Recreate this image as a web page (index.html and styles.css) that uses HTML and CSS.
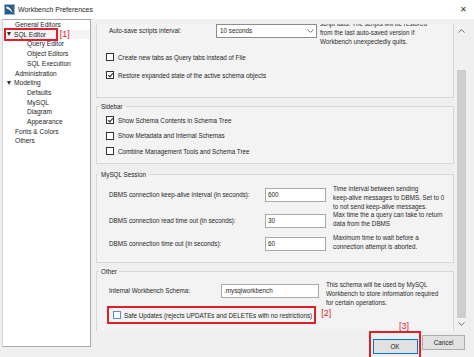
FILE: index.html
```html
<!DOCTYPE html>
<html lang="en">
<head>
    <meta charset="UTF-8">
    <meta name="viewport" content="width=device-width, initial-scale=1.0">
    <title>Workbench Preferences</title>
    <link rel="stylesheet" href="styles.css">
</head>
<body>

    <div class="window">
        <!-- Title bar -->
        <div class="titlebar">
            <svg class="app-icon" width="11" height="11" viewBox="0 0 11 11">
                <rect x="0.5" y="0.5" width="10" height="10" fill="#2b5f8a" stroke="#9bb7cf"/>
                <path d="M2.2 2.6 C5 3 7.4 5 8.6 8.8 C7 6.8 5.2 5.4 2.6 4.4 Z" fill="#ffffff"/>
            </svg>
            <span class="title">Workbench Preferences</span>
            <span class="close">&#x2715;</span>
        </div>

        <div class="main">
            <!-- Page tree -->
            <ul class="tree">
                <li class="node">General Editors</li>
                <li class="branch selected"><span class="marked"><i class="arrow"></i>SQL Editor</span><span class="note">[1]</span></li>
                <li class="leaf">Query Editor</li>
                <li class="leaf">Object Editors</li>
                <li class="leaf">SQL Execution</li>
                <li class="node">Administration</li>
                <li class="branch"><span class="plain"><i class="arrow"></i>Modeling</span></li>
                <li class="leaf">Defaults</li>
                <li class="leaf">MySQL</li>
                <li class="leaf">Diagram</li>
                <li class="leaf">Appearance</li>
                <li class="node">Fonts &amp; Colors</li>
                <li class="node">Others</li>
            </ul>

            <div class="right">
                <div class="scroll">
                    <div class="pane">
                        <!-- first group, scrolled partly out of view -->
                        <div class="group group-top">
                            <div class="field field-autosave">
                                <span class="field-label">Auto-save scripts interval:</span>
                                <div class="select">
                                    <span>10 seconds</span>
                                    <svg width="7" height="4" viewBox="0 0 7 4"><path d="M0.5 0.5 L3.5 3.3 L6.5 0.5" fill="none" stroke="#555" stroke-width="0.8"/></svg>
                                </div>
                                <div class="help">script tabs. The scripts will be restored<br>from the last auto-saved version if<br>Workbench unexpectedly quits.</div>
                            </div>
                            <label class="check check-first"><span class="box"></span>Create new tabs as Query tabs instead of File</label>
                            <label class="check"><span class="box checked"></span>Restore expanded state of the active schema objects</label>
                        </div>

                        <fieldset class="group group-sidebar">
                            <legend>Sidebar</legend>
                            <label class="check"><span class="box checked"></span>Show Schema Contents in Schema Tree</label>
                            <label class="check"><span class="box"></span>Show Metadata and Internal Schemas</label>
                            <label class="check"><span class="box"></span>Combine Management Tools and Schema Tree</label>
                        </fieldset>

                        <fieldset class="group group-session">
                            <legend>MySQL Session</legend>
                            <div class="field field-session row-keepalive">
                                <span class="field-label">DBMS connection keep-alive interval (in seconds):</span>
                                <div class="input">600</div>
                                <div class="help">Time interval between sending<br>keep-alive messages to DBMS. Set to 0<br>to not send keep-alive messages.</div>
                            </div>
                            <div class="field field-session row-read">
                                <span class="field-label">DBMS connection read time out (in seconds):</span>
                                <div class="input">30</div>
                                <div class="help">Max time the a query can take to return<br>data from the DBMS</div>
                            </div>
                            <div class="field field-session">
                                <span class="field-label">DBMS connection time out (in seconds):</span>
                                <div class="input">60</div>
                                <div class="help">Maximum time to wait before a<br>connection attempt is aborted.</div>
                            </div>
                        </fieldset>

                        <fieldset class="group group-other">
                            <legend>Other</legend>
                            <div class="field field-other">
                                <span class="field-label">Internal Workbench Schema:</span>
                                <div class="input">.mysqlworkbench</div>
                                <div class="help">This schema will be used by MySQL<br>Workbench to store information required<br>for certain operations.</div>
                            </div>
                            <div class="safe-row">
                                <label class="safe"><span class="box box-focus"></span>Safe Updates (rejects UPDATEs and DELETEs with no restrictions)</label>
                                <span class="note">[2]</span>
                            </div>
                        </fieldset>
                    </div>

                    <div class="scrollbar">
                        <div class="sb-arrow">
                            <svg width="7" height="4" viewBox="0 0 7 4"><path d="M0.5 3.5 L3.5 0.7 L6.5 3.5" fill="none" stroke="#606060" stroke-width="0.9"/></svg>
                        </div>
                        <div class="sb-track"><div class="sb-thumb"></div></div>
                        <div class="sb-arrow">
                            <svg width="7" height="4" viewBox="0 0 7 4"><path d="M0.5 0.5 L3.5 3.3 L6.5 0.5" fill="none" stroke="#606060" stroke-width="0.9"/></svg>
                        </div>
                    </div>
                </div>

                <div class="buttons">
                    <div class="ok-mark">
                        <span class="note note-ok">[3]</span>
                        <button class="btn btn-default">OK</button>
                    </div>
                    <button class="btn">Cancel</button>
                </div>
            </div>
        </div>
    </div>

</body>
</html>
```

FILE: styles.css
```css
* {
    box-sizing: border-box;
}

body {
    margin: 0;
    font-family: "Liberation Sans", Arial, sans-serif;
    color: #1e1e1e;
    background-color: #ffffff;
}

.window {
    width: 474px;
    height: 357px;
    overflow: hidden;
    display: flex;
    flex-direction: column;
    background-color: #efefef;
}

/* title bar */
.titlebar {
    height: 19px;
    flex-shrink: 0;
    display: flex;
    align-items: center;
    padding-left: 4px;
    background-color: #ffffff;
    font-size: 7px;
}

.app-icon {
    margin-right: 3px;
}

.title {
    flex: 1;
}

.close {
    width: 22px;
    text-align: center;
    font-size: 8px;
    color: #333;
}

.main {
    flex: 1;
    display: flex;
    min-height: 0;
}

/* left page tree */
.tree {
    width: 89px;
    margin: 0 0 10px 2px;
    padding: 0;
    list-style: none;
    background-color: #ffffff;
    border: 1px solid #a8a8a8;
    border-left-color: #d4d4d4;
    font-size: 6.6px;
    line-height: 9.7px;
}

.tree li {
    white-space: nowrap;
}

.tree .node {
    padding-left: 12px;
}

.tree .leaf {
    padding-left: 24px;
}

.tree .branch {
    padding-left: 3px;
}

.tree .selected {
    background-color: #f4f4f4;
}

.tree .marked,
.tree .plain {
    display: inline-block;
    width: 49.7px;
    padding-left: 1px;
}

.tree .marked {
    outline: 2px solid #e01f2b;
    outline-offset: 0.2px;
}

.arrow {
    display: inline-block;
    width: 0;
    height: 0;
    margin-right: 3px;
    border-left: 2.6px solid transparent;
    border-right: 2.6px solid transparent;
    border-top: 4px solid #2e2e2e;
    vertical-align: 0.5px;
}

.note {
    color: #e01f2b;
    font-size: 9px;
    line-height: 9px;
    margin-left: 4px;
}

/* right side */
.right {
    flex: 1;
    display: flex;
    flex-direction: column;
    min-width: 0;
}

.scroll {
    flex: 1;
    display: flex;
    margin-top: 5px;
    min-height: 0;
}

.pane {
    flex: 1;
    overflow: hidden;
    padding-left: 5px;
    font-size: 6.3px;
}

.group {
    margin: 0 1px 0 0;
    border: 1px solid #d8d8d8;
    background-color: #f3f3f3;
    padding: 0 0 0 9px;
    min-width: 0;
}

fieldset.group legend {
    padding: 0 2px;
    margin-left: -7px;
    line-height: 9px;
    color: #222;
}

.group-top {
    margin-top: -20px;
    padding-top: 14px;
    padding-bottom: 16px;
}

.group-sidebar {
    margin-top: 3.5px;
    padding-top: 3.5px;
    padding-bottom: 6px;
}

.group-session {
    margin-top: 5.5px;
    padding-top: 5px;
    padding-bottom: 11px;
}

.group-other {
    margin-top: 3.5px;
    padding-top: 4px;
    padding-bottom: 12px;
}

/* label / input / help rows */
.field {
    display: grid;
    align-items: start;
    margin-left: 3px;
}

.field-autosave {
    grid-template-columns: 104px 101px 1fr;
    column-gap: 3px;
}

.field-session {
    grid-template-columns: 149px 61px 1fr;
    column-gap: 7px;
}

.field-other {
    grid-template-columns: 105px 98px 1fr;
    column-gap: 7px;
}

.row-keepalive {
    height: 26px;
}

.row-read {
    height: 23px;
}

.field-label {
    margin-top: 4.5px;
    line-height: 14px;
    white-space: nowrap;
}

.select,
.input {
    margin-top: 4.5px;
    height: 14px;
    background-color: #ffffff;
    border: 1px solid #a9a9a9;
    line-height: 12px;
    padding-left: 2px;
    white-space: nowrap;
}

.select {
    display: flex;
    justify-content: space-between;
    align-items: center;
    border-color: #8c8c8c;
    padding: 0 2px 0 3px;
}

.help {
    line-height: 9px;
    color: #2a2a2a;
    white-space: nowrap;
}

/* checkboxes */
.check {
    display: flex;
    align-items: center;
    height: 12px;
    margin-top: 3.5px;
    white-space: nowrap;
}

.group-top .check {
    margin-top: 6px;
}

.group-top .check-first {
    margin-top: 5px;
}

.group-sidebar .check:first-of-type {
    margin-top: 0;
}

.box {
    position: relative;
    width: 8px;
    height: 8px;
    margin-right: 4px;
    background-color: #ffffff;
    border: 1px solid #333333;
    flex-shrink: 0;
}

.box.checked::after {
    content: "";
    position: absolute;
    left: 2px;
    top: 0.3px;
    width: 2px;
    height: 4px;
    border-right: 0.8px solid #222;
    border-bottom: 0.8px solid #222;
    transform: rotate(40deg);
}

.box-focus {
    border-color: #5a8fd0;
    margin-right: 3px;
}

.safe-row {
    display: flex;
    align-items: center;
    margin: 2.5px 0 0 4px;
}

.safe {
    display: flex;
    align-items: center;
    height: 12px;
    padding: 0 1px 0 3px;
    white-space: nowrap;
    outline: 2.5px solid #e01f2b;
    outline-offset: 1.5px;
}

.safe-row .note {
    margin-left: 8px;
    margin-top: -4px;
}

/* scrollbar */
.scrollbar {
    width: 13px;
    margin-right: 6px;
    display: flex;
    flex-direction: column;
    background-color: #f0f0f0;
}

.sb-arrow {
    height: 14px;
    display: flex;
    align-items: center;
    justify-content: center;
}

.sb-track {
    flex: 1;
    padding: 32px 2px 0 2px;
}

.sb-thumb {
    height: 248px;
    background-color: #cdcdcd;
}

/* dialog buttons */
.buttons {
    height: 26px;
    flex-shrink: 0;
    display: flex;
    justify-content: flex-end;
    align-items: flex-start;
    padding-right: 9px;
}

.ok-mark {
    position: relative;
    border: 2.5px solid #e01f2b;
    padding: 1.5px 1.5px 5px 1.5px;
}

.note-ok {
    position: absolute;
    left: 28px;
    bottom: calc(100% + 2px);
    margin-left: 0;
}

.btn {
    width: 43px;
    height: 15px;
    margin: 4px 0 0 1px;
    padding: 0;
    font-family: "Liberation Sans", Arial, sans-serif;
    font-size: 6.3px;
    color: #1e1e1e;
    background-color: #e1e1e1;
    border: 1px solid #adadad;
}

.btn-default {
    width: 45px;
    margin: 0;
    border: 1.5px solid #0078d7;
}
```
